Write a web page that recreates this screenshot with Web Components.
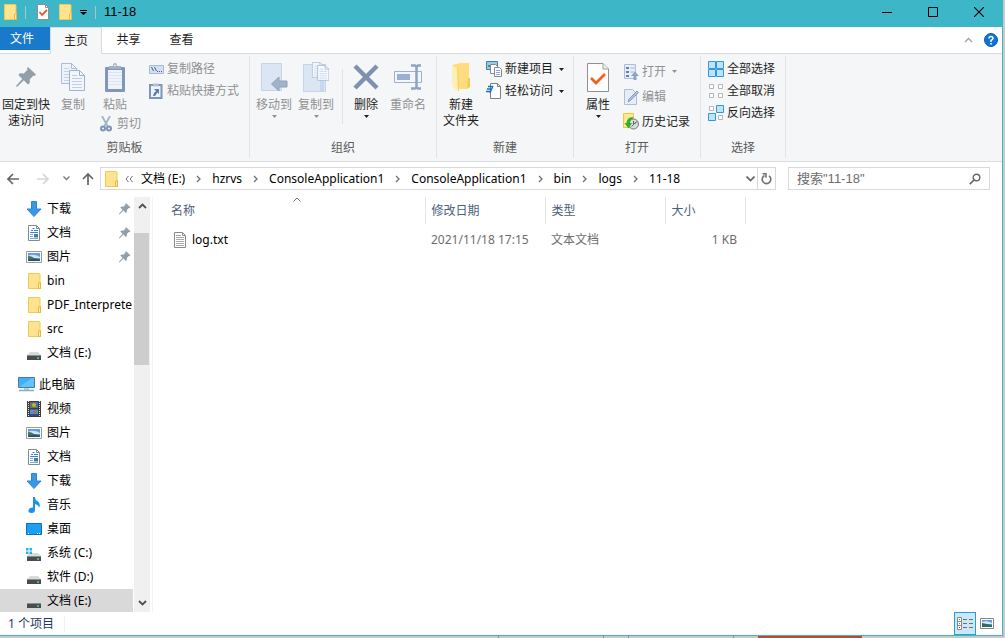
<!DOCTYPE html>
<html lang="zh-CN">
<head>
<meta charset="utf-8">
<title>11-18</title>
<style>
  html, body { height: 100%; }
  body {
    margin: 0;
    overflow: hidden;
    background: #c9c9c9;
    color: #000;
    font: 12px/16px "Noto Sans", "Noto Sans CJK SC", sans-serif;
  }
</style>
</head>
<body>
<explorer-window>
  <title-bar slot="title">11-18</title-bar>

  <ribbon-tabs slot="tabs">
    <ribbon-tab kind="file">文件</ribbon-tab>
    <ribbon-tab kind="active">主页</ribbon-tab>
    <ribbon-tab>共享</ribbon-tab>
    <ribbon-tab>查看</ribbon-tab>
  </ribbon-tabs>

  <ribbon-bar slot="ribbon">
    <ribbon-group label="剪贴板" style="--group-w:250px" flush>
      <large-button icon="pin-large" style="--button-w:52px">固定到快<br>速访问</large-button>
      <large-button icon="copy" disabled>复制</large-button>
      <button-stack paired>
        <large-button icon="paste" disabled>粘贴</large-button>
        <small-button icon="scissors" disabled>剪切</small-button>
      </button-stack>
      <button-stack inset>
        <small-button icon="copy-path" disabled>复制路径</small-button>
        <small-button icon="paste-link" disabled>粘贴快捷方式</small-button>
      </button-stack>
    </ribbon-group>
    <ribbon-group label="组织" style="--group-w:187px">
      <large-button icon="move-to" menu disabled>移动到</large-button>
      <large-button icon="copy-to" menu disabled>复制到</large-button>
      <ribbon-divider></ribbon-divider>
      <large-button icon="delete" menu>删除</large-button>
      <large-button icon="rename" disabled>重命名</large-button>
    </ribbon-group>
    <ribbon-group label="新建" style="--group-w:137px">
      <large-button icon="new-folder">新建<br>文件夹</large-button>
      <button-stack inset>
        <small-button icon="new-item" menu>新建项目</small-button>
        <small-button icon="easy-access" menu>轻松访问</small-button>
      </button-stack>
    </ribbon-group>
    <ribbon-group label="打开" style="--group-w:127px">
      <large-button icon="properties" menu>属性</large-button>
      <button-stack inset tall>
        <small-button icon="open" menu disabled>打开</small-button>
        <small-button icon="edit" disabled>编辑</small-button>
        <small-button icon="history">历史记录</small-button>
      </button-stack>
    </ribbon-group>
    <ribbon-group label="选择" style="--group-w:85px">
      <button-stack inset>
        <small-button icon="select-all">全部选择</small-button>
        <small-button icon="select-none">全部取消</small-button>
        <small-button icon="select-invert">反向选择</small-button>
      </button-stack>
    </ribbon-group>
  </ribbon-bar>

  <address-row slot="address">
    <path-crumb>文档 (E:)</path-crumb>
    <path-crumb>hzrvs</path-crumb>
    <path-crumb>ConsoleApplication1</path-crumb>
    <path-crumb>ConsoleApplication1</path-crumb>
    <path-crumb>bin</path-crumb>
    <path-crumb>logs</path-crumb>
    <path-crumb last>11-18</path-crumb>
  </address-row>

  <nav-pane slot="nav">
    <nav-item icon="download" pinned>下载</nav-item>
    <nav-item icon="document" pinned>文档</nav-item>
    <nav-item icon="picture" pinned>图片</nav-item>
    <nav-item icon="folder">bin</nav-item>
    <nav-item icon="folder">PDF_Interprete</nav-item>
    <nav-item icon="folder">src</nav-item>
    <nav-item icon="drive">文档 (E:)</nav-item>
    <nav-item icon="computer" root>此电脑</nav-item>
    <nav-item icon="video">视频</nav-item>
    <nav-item icon="picture">图片</nav-item>
    <nav-item icon="document">文档</nav-item>
    <nav-item icon="download">下载</nav-item>
    <nav-item icon="music">音乐</nav-item>
    <nav-item icon="desktop">桌面</nav-item>
    <nav-item icon="drive-system">系统 (C:)</nav-item>
    <nav-item icon="drive">软件 (D:)</nav-item>
    <nav-item icon="drive" selected>文档 (E:)</nav-item>
  </nav-pane>

  <file-list slot="files"></file-list>
  <status-bar slot="status">1 个项目</status-bar>
</explorer-window>

<script>
const folder = `<path d="M.5.5h10.500l1 .5v8.500h1v6H.5z" fill="#ffe391" stroke="#f0c94f"/><path d="M10.500 15.500v-5.500h2v5.500z" fill="#ffeaa8" stroke="#e6b93c"/>`;
const hdd = `<path d="M1 7 4 4h8l3 3z" fill="#d9dadb"/><path d="M1 7h14v5H1z" fill="#4a4d50"/><path d="M1 7h14v1H1z" fill="#8b8d8f"/><path d="M11 10h2" stroke="#49e06c" stroke-width="1.500"/>`;
const landscape = `<path d="M.5.5h15v11H.5z" fill="#fff" stroke="#9a9a9a"/><path d="M2 2h12v8H2z" fill="#5d9ee6"/><path d="M2 5q5-3 12 1v1H2z" fill="#cfe6f8"/><path d="M2 5q4 0 6 2l6 1v2H2z" fill="#41715f"/><path d="M2 9q6-1.500 12 0v1H2z" fill="#244d70"/>`;
const pin = `<path d="M12 0 20 7.500 18.500 9 17.500 8.500 13.800 12.300 13.800 16 12 17.500 7.800 13.300 1 20 0 19 6.300 12 2.300 8 4 6.200 7.800 6.500 11.500 2.800 11 1.200z" fill="#929fa8"/>`;
const sheet = (x, y, s, f) => `<g transform="translate(${x} ${y})" stroke="${s}"><path d="M.5.5h10l5 5v15H.5z" fill="${f}"/><path d="M10.500.5v5h5" fill="none"/><path d="M3 5.500h5M3 8.500h10M3 11.500h10M3 14.500h10M3 17.500h10" fill="none" opacity=".6"/></g>`;
const box = (x, y, on) => {
  const s = on ? 7 : 4;
  return `<path d="M${x}.5 ${y}.5h${s}v${s}h-${s}z" fill="${on ? '#bfe3fb' : '#fff'}" stroke="${on ? '#2f96e4' : '#b5b5b5'}"/>`;
};

const ICONS = {
  'folder': [13, 16, folder],
  'pin': [12, 12, `<g transform="scale(.57)">${pin}</g>`],
  'pin-large': [20, 20, pin],
  'props-small': [12, 16, `<path d="M.5.5h8l3 3v12H.5z" fill="#fff" stroke="#8a8f94"/><path d="M8.500.5v3h3" fill="none" stroke="#8a8f94"/><path d="m2.500 8 2.500 3 5-5" fill="none" stroke="#e2582a" stroke-width="1.800"/>`],
  'qat-menu': [7, 5, `<path d="M0 .5h7" stroke="#000"/><path d="M0 2h7L3.500 5z"/>`],
  'min': [10, 10, `<path d="M0 5.500h10" stroke="#000"/>`],
  'max': [10, 10, `<path d="M.5.5h9v9h-9z" fill="none" stroke="#000"/>`],
  'close': [10, 10, `<path d="m0 0 10 10M10 0 0 10" stroke="#000" stroke-width="1.100"/>`],
  'collapse': [9, 6, `<path d="M1 5 4.500 1.500 8 5" fill="none" stroke="#a0a0a0" stroke-width="1.300"/>`],
  'caret': [5, 3, `<path d="M0 0h5L2.500 3z" fill="currentColor"/>`],
  'copy': [24, 28, sheet(0, 0, '#a9bcd8', '#eef3fa') + sheet(8, 7, '#9db2d0', '#f3f7fc')],
  'paste': [20, 29, `<path d="M.5 4.500h19v24H.5z" fill="#7f95bb" stroke="#8297bb"/><path d="M3 7h14v19H3z" fill="#eff4fb"/><path d="M3 9.500h14M3 12.500h14M3 15.500h14M3 18.500h14M3 21.500h14" stroke="#dbe4f1"/><path d="M4 6V3h4q0-3 2-3t2 3h4v3z" fill="#a3b0c6"/><circle cx="10" cy="2.500" r="1" fill="#eee"/>`],
  'scissors': [12, 16, `<path d="M2 0 7.500 10M10 0 4.500 10" stroke="#a3b2cb" stroke-width="1.800"/><circle cx="3" cy="12.500" r="2" fill="none" stroke="#7e93b6" stroke-width="2"/><circle cx="9" cy="12.500" r="2" fill="none" stroke="#7e93b6" stroke-width="2"/>`],
  'copy-path': [15, 9, `<path d="M.5.5h14v8H.5z" fill="#d5dff0" stroke="#a9bad6"/><path d="m2.500 2 2 4M5.500 2l2 4" stroke="#445f96"/><path d="M8 6.500h1M10 6.500h1M12 6.500h1" stroke="#445f96"/>`],
  'paste-link': [14, 16, `<path d="M1 2h11.500v13H1z" fill="#eff4fb" stroke="#7d94bb" stroke-width="2"/><path d="M4 .5h5.500v3H4z" fill="#b3c0d5"/><path d="M5 6h5v5L8.500 9.500 6 13H4q0-3 3-5z" fill="#607daf"/>`],
  'move-to': [27, 29, `<path d="M.5.5h20v27H.5z" fill="#dce5f3" stroke="#c5d4ea"/><path d="M10.500 21 18 14v4h8v6h-8v4z" fill="#a2b2cb" stroke="#8ea1bf"/>`],
  'copy-to': [26, 30, `<path d="M.5 2.500h22v27H.5z" fill="#dce5f3" stroke="#c5d4ea"/><path d="M17 18h4v11h-4z" fill="#c9d8ee"/><g transform="translate(9) scale(.75)">${sheet(0, 0, '#a9bcd8', '#f3f7fc')}${sheet(7, 4, '#9db2d0', '#f7faff')}</g>`],
  'delete': [26, 26, `<path d="M2 2 24 24M24 2 2 24" stroke="#7e91b1" stroke-width="4.500"/>`],
  'rename': [28, 26, `<path d="M.5 7.500h27v11H.5z" fill="#f3f7fd" stroke="#9cb0cf"/><path d="M3 10h13v6H3z" fill="#9bb0d0"/><path d="M17 1.500h4l1.500 1 1.500-1h3M17 24.500h4l1.500-1 1.500 1h3M22.500 2v22" fill="none" stroke="#8ea2c3" stroke-width="2.500"/>`],
  'new-folder': [20, 28, `<path d="M1 2 10 0h8v17l-2 9H4z" fill="#ffdc7c"/><path d="M17 15h2v9l-3 2z" fill="#f5c953"/><path d="m1 2 6 4v22l-6-5z" fill="#ffefb4"/><path d="m6.500 5 1 23" stroke="#f6cf67"/>`],
  'new-item': [16, 16, `<path d="M.5.5h11v8H.5z" fill="#9cc8ea" stroke="#3f80a4"/><path d="M2 5h8" stroke="#4e8f70" stroke-width="2"/><path d="M4.500 3.500h5l2 2v7h-7z" fill="#fff" stroke="#888"/><path d="M8.500 6.500h5l2 2v7h-7z" fill="#fff" stroke="#888"/><path d="M10 9.500h4M10 11.500h4M10 13.500h4" stroke="#8aa5d9"/>`],
  'easy-access': [16, 16, `<path d="M4.500.5h7l3 3v12h-10z" fill="#fff" stroke="#808080"/><path d="M11.500.5v3h3" fill="none" stroke="#808080"/><path d="M2 3.500h5M1 6h5M0 8.500h4M7 3 4 10" stroke="#1871bd" stroke-width="1.300"/>`],
  'properties': [22, 29, `<path d="M.5.5h15.500l5.500 5.500v22.500H.5z" fill="#fff" stroke="#909090"/><path d="M16 .5V6h5.500" fill="#eee" stroke="#a0a0a0"/><path d="m4 15 5 5 9-9" fill="none" stroke="#f4601c" stroke-width="2.700"/>`],
  'open': [15, 16, `<path d="M.5.5h11v14H.5z" fill="#e7edf8" stroke="#adbdd8"/><path d="M2 3h3v2H2zM2 7h3v2H2zM2 11h3v2H2z" fill="#6380b3"/><path d="M6.500 4h4M6.500 8h4" stroke="#a5b7d4"/><path d="M7 12 11 7.500l4 4.500h-2.500v4h-3v-4z" fill="#8ea2c3"/>`],
  'edit': [15, 16, `<path d="M.5.5h8l4 4v11H.5z" fill="#e7edf8" stroke="#adbdd8"/><path d="m5 10 8-8 1.500 1.500-8 8L4 13z" fill="#aebed8" stroke="#8b9fc1"/>`],
  'history': [16, 17, `<path d="M.5.5h10v14H.5z" fill="#ffe98a" stroke="#e9c648"/><circle cx="10.500" cy="11" r="5" fill="#d9dadb" stroke="#777"/><path d="M10.500 8v3l3-1.500M8.500 13.500l5-5" fill="none" stroke="#666"/><path d="M10 4Q4 4 3.500 10H1.500l4 5.500 3.500-5.500H7q0-4 3-4.500z" fill="#2fae36"/>`],
  'select-all': [16, 16, box(0, 0, 1) + box(8, 0, 1) + box(0, 8, 1) + box(8, 8, 1)],
  'select-none': [16, 16, box(1, 1) + box(10, 1) + box(1, 10) + box(10, 10)],
  'select-invert': [16, 16, box(1, 1) + box(8, 0, 1) + box(0, 8, 1) + box(10, 10)],
  'help': [14, 14, `<circle cx="7" cy="7" r="6.500" fill="#0b74d6" stroke="#0a5eb4"/><path d="M5 5.500Q5 3.500 7 3.500t2 1.800Q9 6.500 7 7.500v1.500" fill="none" stroke="#fff" stroke-width="1.500"/><path d="M6.200 10h1.600v1.500H6.200z" fill="#fff"/>`],
  'back': [12, 12, `<path d="M12 6H1M6 1 1 6l5 5" fill="none" stroke="#666" stroke-width="1.700"/>`],
  'forward': [12, 12, `<path d="M0 6h11M6 1l5 5-5 5" fill="none" stroke="#d6d6d6" stroke-width="1.700"/>`],
  'up': [12, 12, `<path d="M6 12V1M1 6l5-5 5 5" fill="none" stroke="#666" stroke-width="1.700"/>`],
  'recent': [7, 5, `<path d="m.5.5 3 3 3-3" fill="none" stroke="#777" stroke-width="1.300"/>`],
  'drop': [9, 6, `<path d="m.5.500 4 4 4-4" fill="none" stroke="#666" stroke-width="1.700"/>`],
  'refresh': [11, 12, `<path d="M3.500 2.500A4.300 4.300 0 1 0 8 2.800" fill="none" stroke="#707070" stroke-width="1.600"/><path d="M1.500.8H5v4" fill="none" stroke="#707070" stroke-width="1.500"/>`],
  'chevron': [5, 8, `<path d="m1 1 3 3-3 3" fill="none" stroke="#707070" stroke-width="1.300"/>`],
  'dbl': [8, 8, `<path d="M3.500 1 1 4l2.500 3M7.500 1 5 4l2.500 3" fill="none" stroke="#707070"/>`],
  'search': [12, 12, `<circle cx="7.500" cy="4.500" r="3.300" fill="none" stroke="#666" stroke-width="1.400"/><path d="M5 7 .8 11.200" stroke="#666" stroke-width="1.700"/>`],
  'sort': [8, 5, `<path d="M.5 4.500 4 1l3.500 3.500" fill="none" stroke="#707070"/>`],
  'sb-up': [9, 6, `<path d="m1 5 3.500-3.500L8 5" fill="none" stroke="#505050" stroke-width="1.800"/>`],
  'sb-down': [9, 6, `<path d="m1 1 3.500 3.500L8 1" fill="none" stroke="#505050" stroke-width="1.800"/>`],
  'download': [16, 16, `<path d="M5.500.5h5v7.500h4.500L8 15.500 1 8h4.500z" fill="#3b97e6" stroke="#2d86d6"/>`],
  'document': [12, 16, `<path d="M.5.5h8l3 3v12H.5z" fill="#fff" stroke="#858a8e"/><path d="M8.500.5v3h3" fill="none" stroke="#858a8e"/><path d="M4.500 3.500h2M3 5.500h2M6 5.500h4M2 7.500h8" stroke="#2b8bd8" stroke-width="1.200"/><path d="M2 9.500h3M2 11.500h3M2 13.500h8" stroke="#85aed0"/><path d="M6 9h4v3.500H6z" fill="#3e7f9a"/>`],
  'picture': [16, 12, landscape],
  'drive': [16, 13, hdd],
  'drive-system': [16, 14, `<g transform="translate(0 1)">${hdd}</g><path d="M0 0h2.500v2.500H0zM3.500 0H6v2.500H3.500zM0 3.500h2.500V6H0zM3.500 3.500H6V6H3.500z" fill="#20b4ec"/>`],
  'computer': [17, 16, `<path d="M.5.5h16v10H.5z" fill="#3fb0fa" stroke="#447ca4"/><path d="M1 10 14 1h2v9z" fill="#62c2fc"/><path d="M6 11h5v2H6z" fill="#b8d2e2"/><path d="M1 13.500h15" stroke="#89aabd" stroke-width="1.500"/>`],
  'video': [14, 16, `<path d="M0 0h14v16H0z" fill="#3d3d3d"/><path d="M1.500 0v16M12.500 0v16" stroke="#e8e8e8" stroke-dasharray="1 1"/><path d="M3 1h8v6H3z" fill="#3f6cb9"/><path d="M3 5h8v2H3z" fill="#4c8a3c"/><circle cx="7" cy="4" r="2" fill="#e5a427"/><path d="M3 2h2v2H3z" fill="#d64d35"/><path d="M3 8.500h8V15H3z" fill="#4d93df"/><path d="M3 13h8v2H3z" fill="#31507a"/><circle cx="8" cy="11" r="1.500" fill="#d9542f"/>`],
  'music': [12, 16, `<path d="M5 0h2q0 3 3 4.500 3 2.500 1 6.500 0-3-4-4v6q0 3-3.500 3T.5 13.500Q.5 11 5 10.500z" fill="#1594ee"/>`],
  'desktop': [16, 12, `<path d="M.5.5h15v11H.5z" fill="#18a0f8" stroke="#0c6fb8"/><path d="M2 10.500h1M11 10.500h1M13 10.500h1" stroke="#fff"/>`],
  'text-file': [12, 16, `<path d="M.5.5h8l3 3v12H.5z" fill="#fff" stroke="#8a8a8a"/><path d="M8.500.5v3h3" fill="none" stroke="#8a8a8a"/><path d="M2 3.500h5M2 5.500h8M2 7.500h8M2 9.500h8M2 11.500h8M2 13.500h8" stroke="#a8a8a8"/>`],
  'view-details': [16, 13, `<path d="M.5.500h4v12h-4zM.5 4.500h4M.5 8.500h4" fill="#fff" stroke="#8a8a8a"/><path d="M2 2.500h1" stroke="#4a8b56"/><path d="M2 6.500h1" stroke="#2c7ee0"/><path d="M2 10.500h1" stroke="#d42a2a"/><path d="M6 2.500h4M12 2.500h4M6 6.500h4M12 6.500h4M6 10.500h4M12 10.500h4" stroke="#707070"/>`],
  'view-large': [14, 11, `<path d="M.5.500h13v10H.5z" fill="#fff" stroke="#858585"/><path d="M2 2h10v7H2z" fill="#5d9ee6"/><path d="M2 4q5-2 10 1v1H2z" fill="#d5eaf9"/><path d="M2 5q5 1 10 2v2H2z" fill="#346a66"/>`]
};

const RESET = `
  :host, *, ::before, ::after { box-sizing: border-box; }
  button { margin: 0; padding: 0; border: 0; background: none; color: inherit; font: inherit; }
  a { color: inherit; text-decoration: none; }`;

function define(name, css, html) {
  customElements.define(name, class extends HTMLElement {
    constructor() {
      super();
      this.attachShadow({ mode: 'open' });
    }
    connectedCallback() {
      const markup = typeof html === 'function' ? html(this) : html;
      const template = document.createElement('template');
      template.innerHTML = `<style>${RESET}${css}</style>${markup}`;
      this.shadowRoot.replaceChildren(template.content.cloneNode(true));
    }
  });
}

define('ui-icon', `
  :host { display: inline-flex; flex: none; }
  svg { display: block; }`,
  el => {
    const [w, h, body] = ICONS[el.getAttribute('name')];
    return `<svg width="${w}" height="${h}" viewBox="0 0 ${w} ${h}" aria-hidden="true">${body}</svg>`;
  });

define('explorer-window', `
  :host { display: flex; flex-direction: column; height: 100vh; }
  .frame {
    flex: 1; min-height: 0; display: flex; flex-direction: column;
    margin-right: 2px; background: #fff;
    border: solid #3db7c8; border-width: 0 1px 1px 0;
  }
  .body { flex: 1; min-height: 0; display: flex; }
  ::slotted([slot=nav]) { flex: none; }
  ::slotted([slot=files]) { flex: 1; min-width: 0; }
  .behind { flex: none; display: flex; height: 2px; padding-left: 498px; }
  .behind i { width: 106px; margin-right: 24px; border: solid #8a8a8a; border-width: 0 1px; }
  .behind b { width: 104px; background: #c8412a; }`,
  `<div class="frame">
    <slot name="title"></slot><slot name="tabs"></slot><slot name="ribbon"></slot><slot name="address"></slot>
    <div class="body"><slot name="nav"></slot><slot name="files"></slot></div>
    <slot name="status"></slot>
  </div>
  <div class="behind"><i></i><i></i><b></b></div>`);

define('title-bar', `
  :host { display: flex; flex: none; height: 27px; background: #3db7c8; font-family: "Liberation Sans", "Noto Sans CJK SC", sans-serif; }
  .quick { display: flex; align-items: center; height: 24px; padding-left: 4px; }
  .sep { width: 1px; height: 13px; margin: 0 8px; background: #a9c4ca; }
  button { display: flex; align-items: center; justify-content: center; height: 24px; }
  .tools { display: flex; gap: 10px; padding: 0 8px 0 3px; }
  .title { flex: 1; line-height: 24px; font-size: 13px; }
  .controls button { width: 46px; }
  .controls { display: flex; }`,
  `<div class="quick">
    <ui-icon name="folder"></ui-icon><span class="sep"></span>
    <div class="tools">
      <button aria-label="属性"><ui-icon name="props-small"></ui-icon></button>
      <button aria-label="新建文件夹"><ui-icon name="folder"></ui-icon></button>
    </div>
    <button aria-label="自定义快速访问工具栏"><ui-icon name="qat-menu"></ui-icon></button>
    <span class="sep"></span>
  </div>
  <span class="title"><slot></slot></span>
  <div class="controls">
    <button aria-label="最小化"><ui-icon name="min"></ui-icon></button>
    <button aria-label="最大化"><ui-icon name="max"></ui-icon></button>
    <button aria-label="关闭"><ui-icon name="close"></ui-icon></button>
  </div>`);

define('ribbon-tabs', `
  :host { display: flex; flex: none; height: 27px; background: #fff; border-bottom: 1px solid #dadbdc; }
  .tabs { display: flex; flex: 1; }
  .tools { display: flex; align-items: center; gap: 11px; padding-right: 4px; }
  button { display: flex; }`,
  `<div class="tabs" role="tablist"><slot></slot></div>
  <div class="tools">
    <button aria-label="最小化功能区"><ui-icon name="collapse"></ui-icon></button>
    <button aria-label="帮助"><ui-icon name="help"></ui-icon></button>
  </div>`);

define('ribbon-tab', `
  :host { display: block; width: 53px; height: 26px; color: #1e1e1e; }
  button { width: 100%; height: 100%; text-align: center; }
  :host([kind=file]) { width: 50px; color: #fff; }
  :host([kind=file]) button { height: 23px; padding-right: 6px; background: #1979ca; }
  :host([kind=active]) { width: 52px; height: 27px; }
  :host([kind=active]) button { background: #f5f6f7; border: solid #dadbdc; border-width: 1px 1px 0; }`,
  `<button role="tab"><slot></slot></button>`);

define('ribbon-bar', `
  :host { display: flex; flex: none; height: 108px; background: #f5f6f7; border-bottom: 1px solid #dadbdc; }`,
  `<slot></slot>`);

define('ribbon-group', `
  :host { display: flex; flex-direction: column; flex: none; width: var(--group-w); padding: 2px 0 3px; }
  .row { display: flex; flex: 1; min-height: 0; padding-left: 3px; border-right: 1px solid #e2e3e4; }
  .label { height: 18px; text-align: center; color: #5a5a5a; border-right: 1px solid #e2e3e4; }
  :host([flush]) .row { padding-left: 0; }`,
  el => `<div class="row"><slot></slot></div><div class="label">${el.getAttribute('label')}</div>`);

define('ribbon-divider', `
  :host { display: block; width: 1px; height: 55px; margin: 13px 2px 0 5px; background: #e2e3e4; }`, ``);

define('button-stack', `
  :host { display: flex; flex-direction: column; align-items: flex-start; flex: none; --small-h: 22px; }
  :host([inset]) { padding: 2px 0 0 4px; }
  :host([tall]) { padding-top: 3px; --small-h: 25px; }
  :host([paired]) { width: 50px; }
  :host([paired]) ::slotted(small-button) { padding-left: 4px; }`,
  `<slot></slot>`);

define('large-button', `
  :host { display: block; flex: none; width: var(--button-w, 42px); color: #1e1e1e; }
  :host([disabled]) { color: #8f9193; }
  button { display: flex; flex-direction: column; align-items: center; width: 100%; padding-top: 5px; white-space: nowrap; }
  .pic { display: flex; align-items: center; justify-content: center; height: 32px; margin-bottom: 4px; }
  .menu { display: flex; height: 6px; align-items: center; }`,
  el => `<button ${el.hasAttribute('disabled') ? 'disabled' : ''}>
    <span class="pic"><ui-icon name="${el.getAttribute('icon')}"></ui-icon></span>
    <span><slot></slot></span>
    ${el.hasAttribute('menu') ? '<span class="menu"><ui-icon name="caret"></ui-icon></span>' : ''}
  </button>`);

define('small-button', `
  :host { display: block; height: var(--small-h); color: #1e1e1e; }
  :host([disabled]) { color: #8f9193; }
  button { display: flex; align-items: center; height: 100%; white-space: nowrap; }
  .pic { display: flex; justify-content: center; width: 16px; margin-right: 3px; }
  .menu { display: flex; margin-left: 6px; }`,
  el => `<button ${el.hasAttribute('disabled') ? 'disabled' : ''}>
    <span class="pic"><ui-icon name="${el.getAttribute('icon')}"></ui-icon></span>
    <slot></slot>
    ${el.hasAttribute('menu') ? '<span class="menu"><ui-icon name="caret"></ui-icon></span>' : ''}
  </button>`);

define('address-row', `
  :host { display: flex; flex: none; height: 35px; padding: 5px 12px 7px 0; }
  .history { display: flex; width: 100px; flex: none; align-items: center; padding-left: 7px; }
  button { display: flex; align-items: center; justify-content: center; flex: none; }
  .back { margin-right: 18px; }
  .recent { margin: 0 12px 0 14px; }
  .path { flex: 1; min-width: 0; display: flex; align-items: center; border: 1px solid #d9d9d9; padding-left: 4px; }
  .crumbs { flex: 1; min-width: 0; display: flex; align-items: center; overflow: hidden; }
  .dbl { margin: 0 8px 0 7px; }
  .drop { width: 14px; }
  .refresh { width: 18px; height: 100%; border-left: 1px solid #d9d9d9; }
  .search { display: flex; align-items: center; flex: none; width: 202px; margin-left: 12px; padding: 0 8px; border: 1px solid #d9d9d9; }
  input { flex: 1; min-width: 0; border: 0; padding: 0; outline: 0; background: none; color: #000; font: 13px/16px "Liberation Sans", "Noto Sans CJK SC", sans-serif; }
  input::placeholder { color: #6d6d6d; opacity: 1; }`,
  `<div class="history">
    <button class="back" aria-label="后退"><ui-icon name="back"></ui-icon></button>
    <button aria-label="前进"><ui-icon name="forward"></ui-icon></button>
    <button class="recent" aria-label="最近浏览的位置"><ui-icon name="recent"></ui-icon></button>
    <button aria-label="上移"><ui-icon name="up"></ui-icon></button>
  </div>
  <div class="path">
    <ui-icon name="folder"></ui-icon><ui-icon class="dbl" name="dbl"></ui-icon>
    <nav class="crumbs"><slot></slot></nav>
    <button class="drop" aria-label="以前的位置"><ui-icon name="drop"></ui-icon></button>
    <button class="refresh" aria-label="刷新"><ui-icon name="refresh"></ui-icon></button>
  </div>
  <label class="search"><input type="search" placeholder='搜索"11-18"' aria-label="搜索"><ui-icon name="search"></ui-icon></label>`);

define('path-crumb', `
  :host { display: flex; align-items: center; flex: none; }
  .gap { display: flex; justify-content: center; width: 27px; }`,
  el => `<a href="#"><slot></slot></a>${el.hasAttribute('last') ? '' : '<span class="gap"><ui-icon name="chevron"></ui-icon></span>'}`);

define('nav-pane', `
  :host { display: flex; width: 153px; border-right: 1px solid #f3f3f3; }
  nav { flex: 1; min-width: 0; overflow: hidden; }
  .bar { display: flex; flex-direction: column; flex: none; width: 16px; margin: 0 2px 0 1px; background: #f0f0f0; }
  .bar button { display: flex; align-items: center; justify-content: center; height: 18px; flex: none; }
  .track { flex: 1; padding: 18px 1px 0 0; }
  .thumb { height: 132px; background: #cdcdcd; }`,
  `<nav><slot></slot></nav>
  <div class="bar">
    <button tabindex="-1" aria-label="向上"><ui-icon name="sb-up"></ui-icon></button>
    <div class="track"><div class="thumb"></div></div>
    <button tabindex="-1" aria-label="向下"><ui-icon name="sb-down"></ui-icon></button>
  </div>`);

define('nav-item', `
  :host { display: block; height: 24px; }
  a { display: flex; align-items: center; height: 100%; padding-left: 26px; white-space: nowrap; }
  .pic { display: flex; justify-content: center; flex: none; width: 16px; margin-right: 5px; }
  .text { flex: 1; min-width: 0; }
  .pin { padding-right: 2px; display: flex; }
  :host([root]) { margin-top: 8px; }
  :host([root]) a { padding-left: 18px; }
  :host([selected]) { background: #d9d9d9; }
  :host([icon^=drive]) .pic { padding-top: 3px; }`,
  el => `<a href="#"><span class="pic"><ui-icon name="${el.getAttribute('icon')}"></ui-icon></span>
    <span class="text"><slot></slot></span>
    ${el.hasAttribute('pinned') ? '<span class="pin"><ui-icon name="pin"></ui-icon></span>' : ''}</a>`);

define('file-list', `
  :host { display: block; padding-left: 8px; overflow: hidden; }
  table { border-collapse: collapse; table-layout: fixed; width: 584px; }
  th, td { padding: 0 6px; font-weight: 400; text-align: left; white-space: nowrap; }
  th { position: relative; height: 27px; color: #4c607a; border-right: 1px solid #e5e5e5; }
  td { height: 32px; color: #6d6d6d; }
  th:first-child, td:first-child { padding-left: 10px; }
  td:last-child { text-align: right; padding-right: 8px; }
  .sort { position: absolute; top: 0; left: 50%; display: flex; }
  a { display: flex; align-items: center; gap: 6px; color: #000; padding-left: 3px; }`,
  `<table>
    <colgroup><col style="width:264px"><col style="width:120px"><col style="width:120px"><col style="width:80px"></colgroup>
    <thead><tr><th>名称<span class="sort"><ui-icon name="sort"></ui-icon></span></th><th>修改日期</th><th>类型</th><th>大小</th></tr></thead>
    <tbody><tr><td><a href="#"><ui-icon name="text-file"></ui-icon>log.txt</a></td><td>2021/11/18 17:15</td><td>文本文档</td><td>1 KB</td></tr></tbody>
  </table>`);

define('status-bar', `
  :host { display: flex; align-items: center; flex: none; height: 23px; padding-left: 8px; color: #1e395b; background: #fff; }
  .count { flex: 1; }
  .count span { display: inline-block; padding-right: 10px; border-right: 1px solid #f0f0f0; }
  .views { display: flex; height: 100%; padding-right: 4px; }
  button { display: flex; align-items: center; justify-content: center; width: 22px; height: 100%; }
  .on { background: #cbe8f6; border: 1px solid #26a0da; }`,
  `<div class="count"><span><slot></slot></span></div>
  <div class="views">
    <button class="on" aria-label="详细信息"><ui-icon name="view-details"></ui-icon></button>
    <button aria-label="大图标"><ui-icon name="view-large"></ui-icon></button>
  </div>`);
</script>
</body>
</html>
